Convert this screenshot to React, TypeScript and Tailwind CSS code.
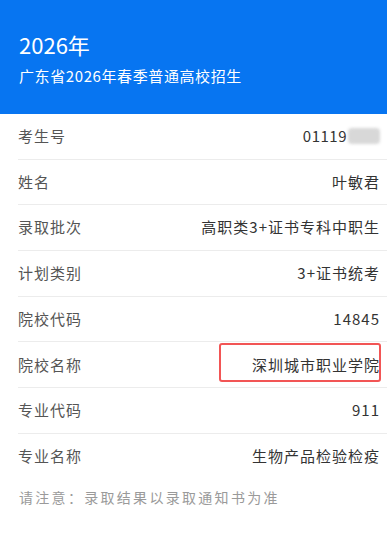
import React from "react";

const rows: { label: string; value: string; boxed?: boolean; masked?: boolean }[] = [
  { label: "考生号", value: "01119", masked: true },
  { label: "姓名", value: "叶敏君" },
  { label: "录取批次", value: "高职类3+证书专科中职生" },
  { label: "计划类别", value: "3+证书统考" },
  { label: "院校代码", value: "14845" },
  { label: "院校名称", value: "深圳城市职业学院", boxed: true },
  { label: "专业代码", value: "911" },
  { label: "专业名称", value: "生物产品检验检疫" },
];

export default function App() {
  return (
    <div
      className="w-[387px] h-[541px] bg-white overflow-hidden"
      style={{ fontFamily: '"Noto Sans CJK SC", "Noto Sans", sans-serif' }}
    >
      {/* header */}
      <div className="h-[114px] bg-[#0775f1] text-white pl-[19px] pt-[28px]">
        <div className="text-[22px] leading-[32px]">2026年</div>
        <div className="text-[15px] leading-[22px] tracking-[0.6px] mt-[5px]">广东省2026年春季普通高校招生</div>
      </div>

      {/* rows */}
      <div className="pl-[18px]">
        {rows.map((r, i) => (
          <div
            key={r.label}
            className={`relative h-[45.7px] flex items-center justify-between pr-[7px] ${
              i < rows.length - 1 ? "border-b border-[#ececec]" : ""
            }`}
          >
            <span className="text-[15px] tracking-[1px] text-[#555]">{r.label}</span>
            {r.masked ? (
              <span className="flex items-center text-[15px] text-[#333] tracking-[0.5px]">
                {r.value}
                <span className="ml-[1px] w-[32px] h-[16px] bg-[#d8d8d8] rounded-[4px] blur-[1.5px]" />
              </span>
            ) : (
              <span className="text-[15px] tracking-[1px] text-[#333]">{r.value}</span>
            )}
            {r.boxed && (
              <div className="absolute left-[201px] right-[6px] top-[1px] h-[39px] border-2 border-[#f25555] rounded-[3px]" />
            )}
          </div>
        ))}
      </div>

      <div className="pl-[19px] mt-[7px] text-[14px] tracking-[2.3px] text-[#9a9a9a]">
        请注意：录取结果以录取通知书为准
      </div>
    </div>
  );
}
